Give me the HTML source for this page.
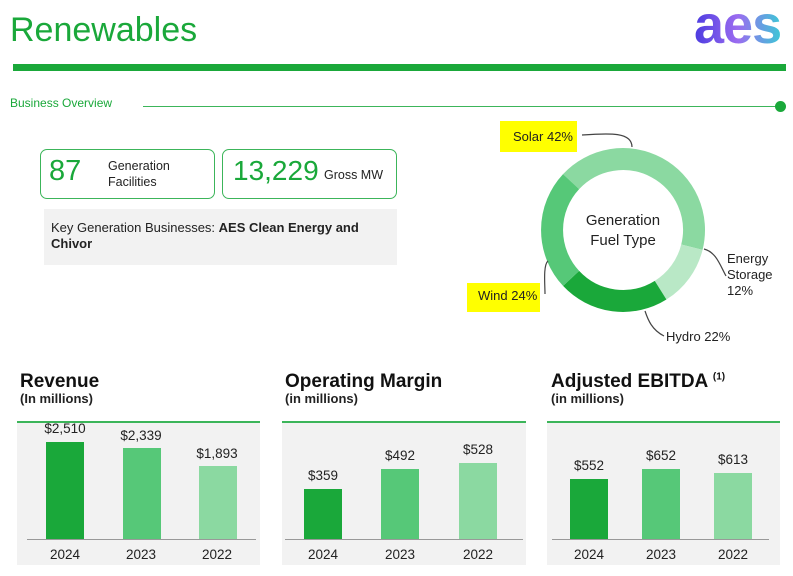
<!DOCTYPE html><html><head><meta charset="utf-8"><style>
body{margin:0;width:793px;height:576px;background:#fff;position:relative;overflow:hidden;font-family:"Liberation Sans",sans-serif}
.a{position:absolute}
.box{position:absolute;border:1.5px solid #3cb55a;border-radius:7px;box-sizing:border-box}
.panel{position:absolute;top:421px;height:144px;background:#f2f2f2;border-top:2px solid #3cb55a;box-sizing:border-box}
.bar{position:absolute;width:38px}
.v{position:absolute;font-size:13.5px;color:#222;width:60px;text-align:center}
.y{position:absolute;font-size:13.5px;color:#222;width:60px;text-align:center;top:547px}
.t{position:absolute;font-size:19px;font-weight:bold;color:#111}
.s{position:absolute;font-size:13px;font-weight:bold;color:#222}
.base{position:absolute;top:539px;height:1px;background:#999}
</style></head><body>
<div class="a" style="left:10px;top:11px;font-size:34px;color:#1aa83a">Renewables</div>
<div class="a" style="left:694px;top:-6px;font-size:54px;font-weight:bold;letter-spacing:-1px;background:linear-gradient(90deg,#4b3be0,#9b6cf0 50%,#3cc7d6);-webkit-background-clip:text;color:transparent">aes</div>
<div class="a" style="left:13px;top:64px;width:773px;height:7px;background:#1aa83a"></div>
<div class="a" style="left:10px;top:96px;font-size:12px;color:#1aa83a">Business Overview</div>
<div class="a" style="left:143px;top:106px;width:638px;height:1px;background:#3cb55a"></div>
<div class="a" style="left:775px;top:101px;width:11px;height:11px;border-radius:50%;background:#1aa83a"></div>

<div class="box" style="left:40px;top:149px;width:175px;height:50px"></div>
<div class="a" style="left:49px;top:155px;font-size:29px;color:#1aa83a">87</div>
<div class="a" style="left:108px;top:158px;font-size:12.5px;color:#222;line-height:16px">Generation<br>Facilities</div>
<div class="box" style="left:222px;top:149px;width:175px;height:50px"></div>
<div class="a" style="left:233px;top:155px;font-size:28px;color:#1aa83a">13,229</div>
<div class="a" style="left:324px;top:168px;font-size:12.5px;color:#222">Gross MW</div>
<div class="a" style="left:44px;top:209px;width:353px;height:56px;background:#f2f2f2"></div>
<div class="a" style="left:51px;top:220px;font-size:13px;color:#222;line-height:16px;width:340px">Key Generation Businesses: <b>AES Clean Energy and Chivor</b></div>

<div class="a" style="left:500px;top:121px;width:77px;height:31px;background:#ffff00"></div>
<div class="a" style="left:467px;top:283px;width:73px;height:29px;background:#ffff00"></div>
<svg class="a" style="left:0;top:0" width="793" height="576">
<g fill="none" stroke-width="22">
<path d="M571.1 181.6 A71 71 0 0 1 691.9 247.2" stroke="#8bd9a1"/>
<path d="M691.9 247.2 A71 71 0 0 1 660.6 290.2" stroke="#b9e8c6"/>
<path d="M660.6 290.2 A71 71 0 0 1 571.1 278.4" stroke="#1aa83a"/>
<path d="M571.1 278.4 A71 71 0 0 1 571.1 181.6" stroke="#56c878"/>
</g>
<g fill="none" stroke="#444" stroke-width="1.2">
<path d="M582 135 C610 133 632 132 632 147"/>
<path d="M704 249 C716 252 720 265 726 276"/>
<path d="M645 311 C648 320 652 330 664 336"/>
<path d="M548 261 C543 265 545 285 545 294"/>
</g>
</svg>
<div class="a" style="left:513px;top:129px;font-size:13px;color:#222">Solar 42%</div>
<div class="a" style="left:478px;top:288px;font-size:13px;color:#222">Wind 24%</div>
<div class="a" style="left:727px;top:251px;font-size:13px;color:#222;line-height:16px">Energy<br>Storage<br>12%</div>
<div class="a" style="left:666px;top:329px;font-size:13px;color:#222">Hydro 22%</div>
<div class="a" style="left:573px;top:211px;width:100px;text-align:center;font-size:15px;color:#222;line-height:20px">Generation<br>Fuel Type</div>

<div class="t" style="left:20px;top:371px">Revenue</div>
<div class="s" style="left:20px;top:391px">(In millions)</div>
<div class="t" style="left:285px;top:371px">Operating Margin</div>
<div class="s" style="left:285px;top:391px">(in millions)</div>
<div class="t" style="left:551px;top:371px">Adjusted EBITDA <sup style="font-size:10px">(1)</sup></div>
<div class="s" style="left:551px;top:391px">(in millions)</div>

<div class="panel" style="left:17px;width:243px"></div>
<div class="panel" style="left:282px;width:244px"></div>
<div class="panel" style="left:547px;width:233px"></div>
<div class="base" style="left:27px;width:229px"></div>
<div class="base" style="left:285px;width:238px"></div>
<div class="base" style="left:552px;width:217px"></div>

<div class="bar" style="left:46px;top:442px;height:97px;background:#1aa83a"></div>
<div class="bar" style="left:123px;top:448px;height:91px;background:#56c878"></div>
<div class="bar" style="left:199px;top:466px;height:73px;background:#8bd9a1"></div>
<div class="v" style="left:35px;top:421px">$2,510</div>
<div class="v" style="left:111px;top:428px">$2,339</div>
<div class="v" style="left:187px;top:446px">$1,893</div>
<div class="y" style="left:35px">2024</div><div class="y" style="left:111px">2023</div><div class="y" style="left:187px">2022</div>

<div class="bar" style="left:304px;top:489px;height:50px;background:#1aa83a"></div>
<div class="bar" style="left:381px;top:469px;height:70px;background:#56c878"></div>
<div class="bar" style="left:459px;top:463px;height:76px;background:#8bd9a1"></div>
<div class="v" style="left:293px;top:468px">$359</div>
<div class="v" style="left:370px;top:448px">$492</div>
<div class="v" style="left:448px;top:442px">$528</div>
<div class="y" style="left:293px">2024</div><div class="y" style="left:370px">2023</div><div class="y" style="left:448px">2022</div>

<div class="bar" style="left:570px;top:479px;height:60px;background:#1aa83a"></div>
<div class="bar" style="left:642px;top:469px;height:70px;background:#56c878"></div>
<div class="bar" style="left:714px;top:473px;height:66px;background:#8bd9a1"></div>
<div class="v" style="left:559px;top:458px">$552</div>
<div class="v" style="left:631px;top:448px">$652</div>
<div class="v" style="left:703px;top:452px">$613</div>
<div class="y" style="left:559px">2024</div><div class="y" style="left:631px">2023</div><div class="y" style="left:703px">2022</div>
</body></html>
